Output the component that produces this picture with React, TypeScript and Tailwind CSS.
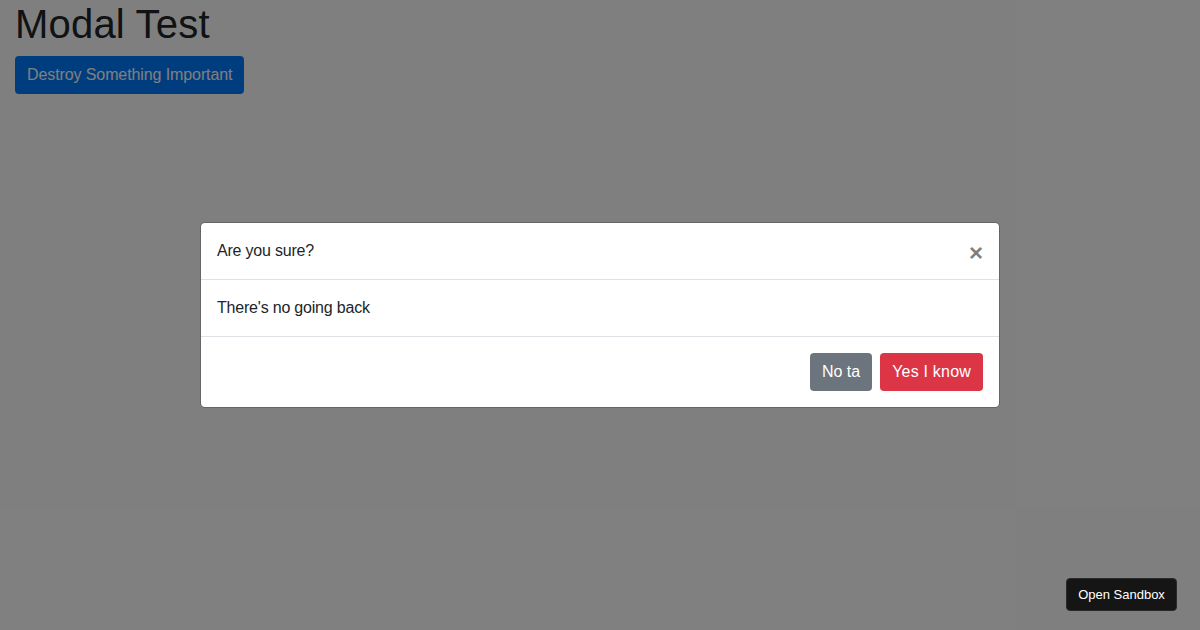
export default function App() {
  return (
    <main className="relative h-[630px] w-[1200px] overflow-hidden bg-white font-['Liberation_Sans',Arial,sans-serif] text-[#212529]">
      {/* Page underneath */}
      <div className="px-[15px]">
        <h1 className="mb-2 text-[40px] font-medium leading-[48px] tracking-[0.2px]">Modal Test</h1>
        <button className="h-[38px] rounded bg-[#007bff] px-3 text-base leading-6 tracking-[-0.1px] text-white">
          Destroy Something Important
        </button>
      </div>

      {/* Backdrop + modal */}
      <div className="absolute inset-0 flex items-center justify-center bg-black/50">
        <div className="w-[800px] rounded-[5px] border border-black/20 bg-white bg-clip-padding">
          <div className="flex items-start justify-between border-b border-[#dee2e6] p-4">
            <h5 className="text-base leading-6 tracking-[-0.2px]">Are you sure?</h5>
            <button className="-my-4 -mr-4 p-4 text-2xl font-bold leading-6 text-black opacity-50">
              <span className="relative top-[2px]">×</span>
            </button>
          </div>
          <div className="p-4 text-base leading-6 tracking-[-0.2px]">There's no going back</div>
          <div className="flex items-center justify-end gap-2 border-t border-[#dee2e6] p-4">
            <button className="h-[38px] rounded bg-[#6c757d] px-3 text-base leading-6 text-white">No ta</button>
            <button className="h-[38px] rounded bg-[#dc3545] px-3 text-base leading-6 tracking-[0.2px] text-white">Yes I know</button>
          </div>
        </div>
      </div>

      {/* Sandbox button */}
      <button className="absolute bottom-[19px] right-[23px] h-[33px] w-[111px] rounded border border-[#2a2a2a] bg-[#151515] text-[13px] text-white">
        Open Sandbox
      </button>
    </main>
  );
}
